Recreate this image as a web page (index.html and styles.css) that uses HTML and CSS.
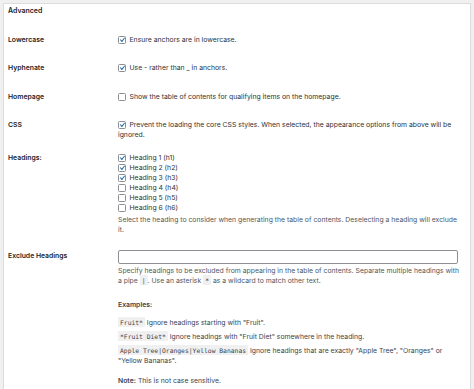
FILE: index.html
```html
<!DOCTYPE html>
<html>
<head>
<meta charset="utf-8">
<link rel="stylesheet" href="styles.css">
</head>
<body>
<div class="panel">
  <h2 class="section-title">Advanced</h2>
  <div class="form">
    <div class="row">
      <div class="th">Lowercase</div>
      <div class="td"><label class="opt"><span class="cb on"><svg viewBox="0 0 20 20"><path d="M14.83 4.89l1.34.94-5.81 8.38H9.02L5.78 9.67l1.34-1.25 2.57 2.4z"/></svg></span>Ensure anchors are in lowercase.</label></div>
    </div>
    <div class="row">
      <div class="th">Hyphenate</div>
      <div class="td"><label class="opt"><span class="cb on"><svg viewBox="0 0 20 20"><path d="M14.83 4.89l1.34.94-5.81 8.38H9.02L5.78 9.67l1.34-1.25 2.57 2.4z"/></svg></span>Use - rather than _ in anchors.</label></div>
    </div>
    <div class="row">
      <div class="th">Homepage</div>
      <div class="td"><label class="opt"><span class="cb"></span>Show the table of contents for qualifying items on the homepage.</label></div>
    </div>
    <div class="row">
      <div class="th">CSS</div>
      <div class="td"><label class="opt"><span class="cb on"><svg viewBox="0 0 20 20"><path d="M14.83 4.89l1.34.94-5.81 8.38H9.02L5.78 9.67l1.34-1.25 2.57 2.4z"/></svg></span>Prevent the loading the core CSS styles. When selected, the appearance options from above will be</label><div class="opt-text">ignored.</div></div>
    </div>
    <div class="row">
      <div class="th">Headings:</div>
      <div class="td td-headings">
        <label class="opt"><span class="cb on"><svg viewBox="0 0 20 20"><path d="M14.83 4.89l1.34.94-5.81 8.38H9.02L5.78 9.67l1.34-1.25 2.57 2.4z"/></svg></span>Heading 1 (h1)</label>
        <label class="opt"><span class="cb on"><svg viewBox="0 0 20 20"><path d="M14.83 4.89l1.34.94-5.81 8.38H9.02L5.78 9.67l1.34-1.25 2.57 2.4z"/></svg></span>Heading 2 (h2)</label>
        <label class="opt"><span class="cb on"><svg viewBox="0 0 20 20"><path d="M14.83 4.89l1.34.94-5.81 8.38H9.02L5.78 9.67l1.34-1.25 2.57 2.4z"/></svg></span>Heading 3 (h3)</label>
        <label class="opt"><span class="cb"></span>Heading 4 (h4)</label>
        <label class="opt"><span class="cb"></span>Heading 5 (h5)</label>
        <label class="opt"><span class="cb"></span>Heading 6 (h6)</label>
        <p class="desc">Select the heading to consider when generating the table of contents. Deselecting a heading will exclude<br>it.</p>
      </div>
    </div>
    <div class="row">
      <div class="th">Exclude Headings</div>
      <div class="td td-exclude">
        <div class="input"></div>
        <p class="desc">Specify headings to be excluded from appearing in the table of contents. Separate multiple headings with<br>a pipe <code>|</code>. Use an asterisk <code>*</code> as a wildcard to match other text.</p>
        <p class="desc strong examples">Examples:</p>
        <p class="desc ex ex-first"><code>Fruit*</code> Ignore headings starting with "Fruit".</p>
        <p class="desc ex"><code>*Fruit Diet*</code> Ignore headings with "Fruit Diet" somewhere in the heading.</p>
        <p class="desc ex"><code>Apple Tree|Oranges|Yellow Bananas</code> Ignore headings that are exactly "Apple Tree", "Oranges" or<br>"Yellow Bananas".</p>
        <p class="desc note"><strong>Note:</strong> This is not case sensitive.</p>
      </div>
    </div>
  </div>
</div>
</body>
</html>
```
FILE: styles.css
```css
html, body {
  margin: 0;
  padding: 0;
  background: #f0f0f1;
  height: 100%;
  overflow: hidden;
}

.panel {
  margin: 3px 3px 0 3px;
  background: #fff;
  border: 1px solid #dcdcde;
  border-bottom: none;
  padding: 2px 8px 0 4px;
  min-height: 400px;
  font-family: Inter, "Noto Sans", sans-serif;
  font-size: 6.85px;
  line-height: 10px;
  color: #2c3338;
}

.section-title {
  margin: 0 0 9.85px 0;
  font-size: 7px;
  line-height: 10px;
  font-weight: 600;
  color: #1d2327;
}

.row {
  display: grid;
  grid-template-columns: 110px 1fr;
  align-items: start;
}

.th {
  padding: 9.15px 0;
  font-weight: 600;
  color: #1d2327;
  white-space: nowrap;
}

.td {
  padding: 9.15px 0 3.85px 0;
  white-space: nowrap;
}

.td-headings {
  padding-bottom: 7.35px;
}

.td-exclude {
  padding-top: 7.65px;
}

.opt {
  display: flex;
  align-items: center;
  height: 10px;
}

.cb {
  box-sizing: border-box;
  width: 8px;
  height: 8px;
  border: 1px solid #8c8f94;
  border-radius: 1.5px;
  background: #fff;
  margin-right: 4px;
  margin-left: -0.5px;
  flex: none;
  position: relative;
}

.cb svg {
  position: absolute;
  left: -2px;
  top: -2px;
  width: 10px;
  height: 10px;
  fill: #2271b1;
}

.desc {
  margin: 2px 0 0 0;
  color: #50575e;
}

.input {
  box-sizing: border-box;
  height: 14px;
  width: 340px;
  border: 1px solid #8c8f94;
  border-radius: 2px;
  background: #fff;
}

code {
  font-family: "DejaVu Sans Mono", "Liberation Mono", monospace;
  font-size: 6.35px;
  background: #f0f0f1;
  padding: 1.5px 2px;
  color: #3c434a;
}

.examples {
  margin-top: 14px;
  font-weight: 600;
  color: #3c434a;
}

.ex {
  margin-top: 4px;
  color: #3c434a;
}

.ex-first {
  margin-top: 8px;
}

.note {
  margin-top: 10px;
  color: #3c434a;
}

.note strong {
  font-weight: 600;
}
```
